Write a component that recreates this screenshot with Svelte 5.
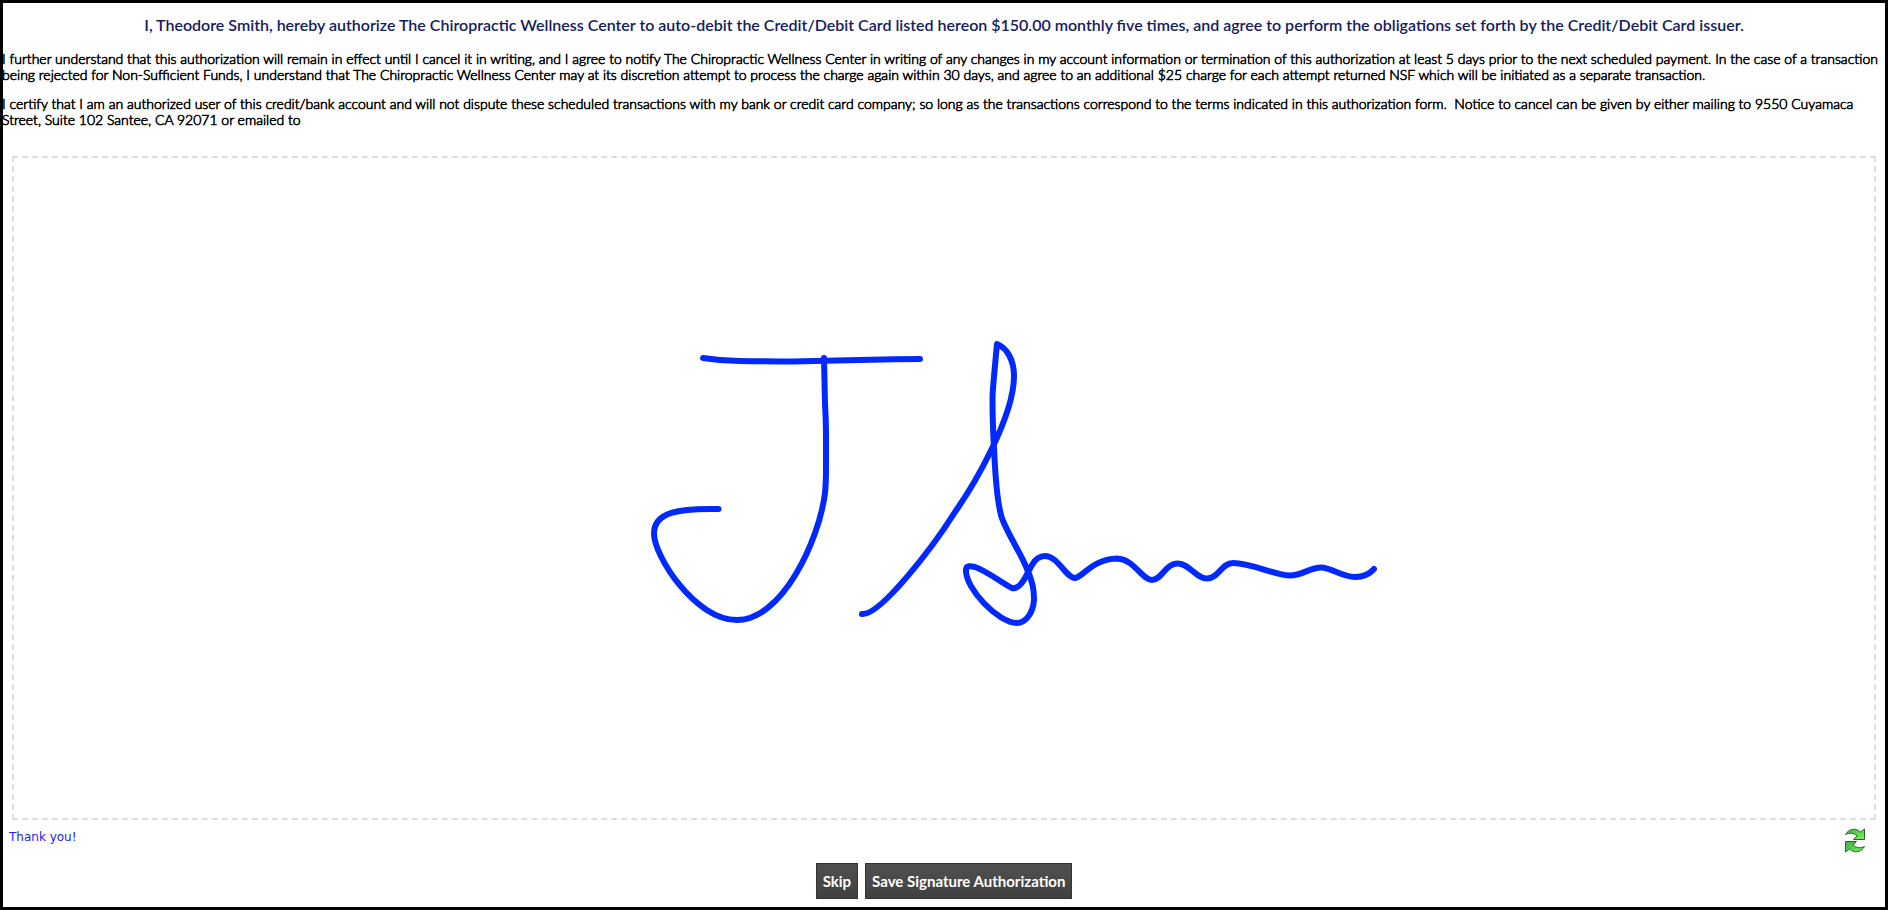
<script>
	const { name = 'Theodore Smith', amount = '$150.00' } = $props()

	// One entry per pen-down stroke
	const signature = [
		'M703 358 Q722 361 740 361 Q790 362 825 360.7 Q870 359.5 920 359',
		'M824 358 L825 404 Q826 420 826 435 V467 Q826 484 825 493 C819 541 782 620 737 620 C695 620 654 556 654 533.5 C654 512 679 508 718.5 509',
		'M862 614 C880 616 933 547 955 512 C974 485 1014 417 1014 376 C1014 360 1007 348 997 344 Q993 386 992.5 396 Q992.5 425 994 447 Q996 496 1001 515 C1004 528 1022 555 1027 569 C1033 583 1034 590 1034 600 C1033 614 1025 623 1017 623 C998 623 965 588 966 570 C966 565 971 566 975 567 C987 571 1005 585 1012 588 C1021 590 1026 575 1032 565 Q1037 556 1045 556 C1058 556 1066 578 1075 578 C1082 578 1092 559 1117 558.5 C1134 559 1142 580 1152 580 C1162 580 1165 563.5 1178 563.5 C1189 563.5 1196 578.5 1207 578.5 C1219 578.5 1221 563 1233 563 C1252 563 1275 575.5 1290 575.5 C1302 575.5 1310 567.5 1321 567.5 C1331 567.5 1342 577 1355 577 Q1367 577 1374 569'
	]
	let strokes = $state([...signature])

	function clearPad() {
		strokes = []
	}
	function skip() {
		strokes = []
	}
</script>

<main class="authorization">
	<h1 class="statement">
		I, {name}, hereby authorize The Chiropractic Wellness Center to auto-debit the Credit/Debit Card listed hereon {amount} monthly five times, and agree to perform the obligations set forth by the Credit/Debit Card issuer.
	</h1>
	<p>
		I further understand that this authorization will remain in effect until I cancel it in writing, and I agree to notify The Chiropractic Wellness Center in writing of any changes in my account information or termination of this authorization at least 5 days prior to the next scheduled payment. In the case of a transaction being rejected for Non-Sufficient Funds, I understand that The Chiropractic Wellness Center may at its discretion attempt to process the charge again within 30 days, and agree to an additional $25 charge for each attempt returned NSF which will be initiated as a separate transaction.
	</p>
	<p>
		I certify that I am an authorized user of this credit/bank account and will not dispute these scheduled transactions with my bank or credit card company; so long as the transactions correspond to the terms indicated in this authorization form.&nbsp; Notice to cancel can be given by either mailing to 9550 Cuyamaca Street, Suite 102 Santee, CA 92071 or emailed to
	</p>

	<!-- Signature pad -->
	<div class="pad">
		<svg viewBox="14 158 1860 660" aria-hidden="true">
			{#each strokes as d}
				<path {d} />
			{/each}
		</svg>
	</div>

	<div class="pad-footer">
		<span class="status">Thank you!</span>
		<button class="reset" type="button" aria-label="Clear signature" onclick={clearPad}>
			<svg viewBox="0 0 20 25" width="20" height="25" aria-hidden="true">
				<defs>
					<linearGradient id="leaf" x1="0" y1="0" x2="1" y2="1">
						<stop offset="0" stop-color="#3fae45" />
						<stop offset="1" stop-color="#7df060" />
					</linearGradient>
				</defs>
				<g fill="url(#leaf)" stroke="#1d6b2c" stroke-linejoin="round">
					<path d="M.5 6.5 C4 .5 11 -.5 15.5 4 L19.5 1 V11.5 H8.5 L12 8 C9 5 4.5 4.5 .5 6.5 Z" />
					<path d="M19.5 18.5 C16 24.5 9 25.5 4.5 21 L.5 24 V13.5 H11.5 L8 17 C11 20 15.5 20.5 19.5 18.5 Z" />
				</g>
			</svg>
		</button>
	</div>

	<div class="actions">
		<button class="btn" type="button" onclick={skip}>Skip</button>
		<button class="btn" type="submit">Save Signature Authorization</button>
	</div>
</main>

<style>
	:global(body) {
		background: #fff;
	}
	.authorization {
		box-sizing: border-box;
		min-height: 100vh;
		padding: 12px 0 8px;
		border: 3px solid #000;
		font-family: Lato, "Liberation Sans", sans-serif;
		color: #000;
	}
	.statement {
		margin: 0 0 16px;
		font-size: 16px;
		line-height: 20px;
		font-weight: 600;
		text-align: center;
		color: #14205e;
	}
	p {
		margin: 0 -1px 13px;
		font-size: 14px;
		line-height: 16px;
		font-weight: 300;
		-webkit-text-stroke: 0.6px currentColor;
	}

	/* ── Signature pad ── */
	.pad {
		margin: 28px 9px 0;
		border: 2px dashed #ddd;
	}
	.pad svg {
		display: block;
		width: 100%;
	}
	.pad path {
		fill: none;
		stroke: #0029ff;
		stroke-width: 6;
		stroke-linecap: round;
		stroke-linejoin: round;
	}
	.pad-footer {
		display: flex;
		justify-content: space-between;
		align-items: flex-start;
		padding: 8px 20px 0 6px;
	}
	.status {
		font-family: Verdana, "DejaVu Sans", sans-serif;
		font-size: 12px;
		line-height: 18px;
		color: #1c1cf0;
	}
	.reset {
		padding: 0;
		border: 0;
		background: none;
		cursor: pointer;
	}
	.reset svg {
		display: block;
	}

	/* ── Buttons ── */
	.actions {
		display: flex;
		justify-content: center;
		gap: 7px;
		margin-top: 10px;
	}
	.btn {
		height: 36px;
		padding: 0 6px;
		border: 1px solid #333;
		background: linear-gradient(#505050, #404040);
		font-family: inherit;
		font-size: 15px;
		font-weight: 700;
		color: #fff;
		cursor: pointer;
	}
	.btn:hover {
		background: #555;
	}
</style>
